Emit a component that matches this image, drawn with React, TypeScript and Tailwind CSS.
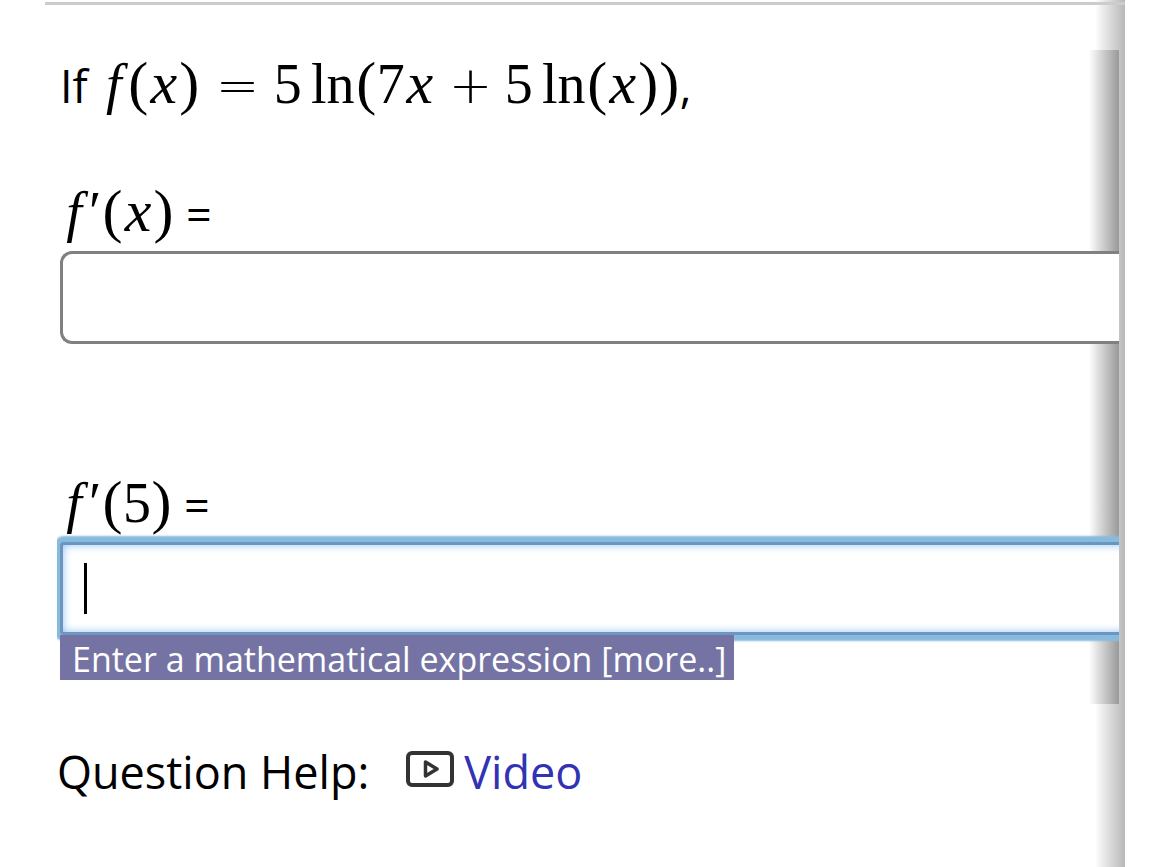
import React from 'react';

type GlyphProps = { children: React.ReactNode; className: string };

const Glyph: React.FC<GlyphProps> = ({ children, className }) => (
  <span className={`inline-block text-center leading-tight ${className}`}>{children}</span>
);

const F = () => <Glyph className="w-7 text-[56px] italic">f</Glyph>;
const X = () => <Glyph className="w-[30px] text-[60px] italic">x</Glyph>;
const Digit: React.FC<{ children: React.ReactNode }> = ({ children }) => (
  <Glyph className="w-7 text-[56px]">{children}</Glyph>
);
const Ln = () => <Glyph className="ml-2 w-[46px] text-[56px]">ln</Glyph>;
const Open = () => <Glyph className="w-[21px] text-[60px]">(</Glyph>;
const Close = () => <Glyph className="w-[21px] text-[60px]">)</Glyph>;
const Prime = () => <Glyph className="w-3.5 text-[56px]">′</Glyph>;

const Operator: React.FC<GlyphProps> = ({ children, className }) => (
  <Glyph className={`w-[42px] font-['DejaVu_Sans',sans-serif] text-[52px] font-extralight ${className}`}>
    {children}
  </Glyph>
);

const Formula: React.FC<{ children: React.ReactNode }> = ({ children }) => (
  <span className="whitespace-nowrap font-['Liberation_Serif',serif]">{children}</span>
);

const App: React.FC = () => {
  return (
    <div className="min-h-screen bg-white font-['Open_Sans','Noto_Sans',sans-serif] text-[45px] text-black">
      <main className="mr-[45px] min-h-screen bg-linear-to-l from-[#b8b8b8] to-white to-[30px] pt-0.5">
        <hr className="ml-[45px] border-t-3 border-[#cccccc]" />
        <section className="mt-[45px] mr-1.5 ml-[57px] h-[654px] overflow-hidden bg-linear-to-l from-[#999999] to-white to-[30px] pl-[3px]">
          <p className="-mt-1 flex h-[68px] items-baseline leading-[68px]">
            <span className="mr-3">If</span>
            <Formula>
              <F /><Open /><X /><Close />
              <Operator className="mx-4">=</Operator>
              <Digit>5</Digit><Ln /><Open />
              <Digit>7</Digit><X />
              <Operator className="mx-3.5">+</Operator>
              <Digit>5</Digit><Ln /><Open /><X /><Close /><Close />
            </Formula>
            <span>,</span>
          </p>

          <label htmlFor="derivative" className="mt-[60px] flex h-[77px] items-baseline leading-[68px]">
            <Formula>
              <F /><Prime /><Open /><X /><Close />
            </Formula>
            <span className="ml-3">=</span>
          </label>
          <input
            id="derivative"
            type="text"
            className="block h-[93px] w-full rounded-l-xl border-3 border-r-0 border-[#808080] bg-white px-5 outline-none"
          />

          <label htmlFor="value" className="mt-[121px] flex h-[77px] items-baseline leading-[68px]">
            <Formula>
              <F /><Prime /><Open /><Digit>5</Digit><Close />
            </Formula>
            <span className="ml-3">=</span>
          </label>
          <div className="relative -mr-4">
            <input
              id="value"
              type="text"
              aria-describedby="hint"
              className="block h-[93px] w-full rounded-l-sm border-3 border-r-0 border-[#6c96c0] bg-white px-5 shadow-[0_0_2px_6px_#88bade,inset_0_0_9px_#8fc0f5] outline-none"
            />
            <span className="absolute top-[21px] left-6 h-[51px] w-[3px] bg-black" />
            <div
              id="hint"
              className="absolute top-full left-0 h-[45px] bg-[#7573a3] pr-2 pl-3 text-[34px] leading-[48px] whitespace-nowrap text-white"
            >
              Enter a mathematical expression [more..]
            </div>
          </div>
        </section>

        <div className="mt-8 ml-[57px] flex items-center leading-[72px]">
          <span>Question Help:</span>
          <a href="#" className="ml-[37px] flex items-center gap-2.5 text-[#3232b4]">
            <svg className="mb-1.5" width="48" height="36" viewBox="0 0 48 36" fill="none" stroke="#333333" strokeLinejoin="round">
              <rect x="2" y="2" width="44" height="32" rx="4" strokeWidth="4" />
              <path d="M19.5 11v14L31 18z" strokeWidth="3.5" />
            </svg>
            Video
          </a>
        </div>
      </main>
    </div>
  );
};

export default App;
